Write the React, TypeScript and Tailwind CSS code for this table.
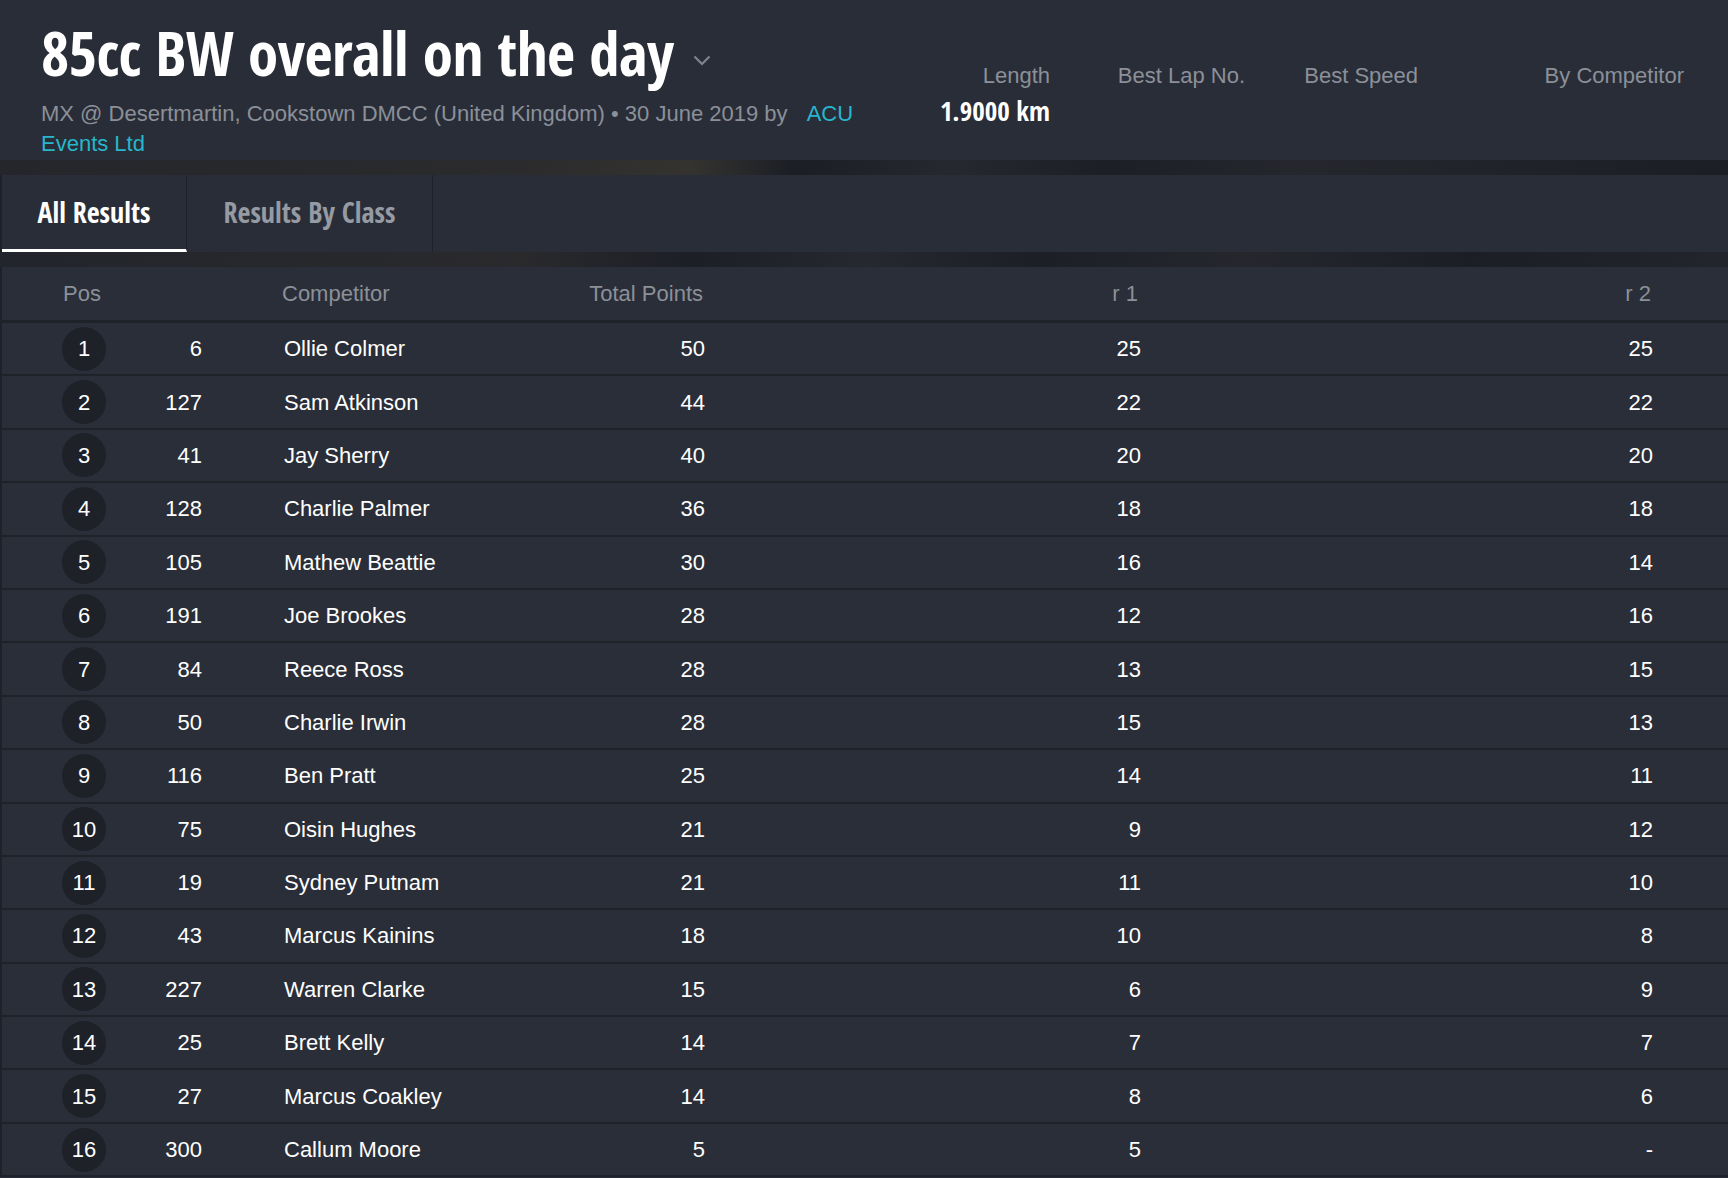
import React from "react";

const rows: [number, string, string, string, string, string][] = [
  [1, "6", "Ollie Colmer", "50", "25", "25"],
  [2, "127", "Sam Atkinson", "44", "22", "22"],
  [3, "41", "Jay Sherry", "40", "20", "20"],
  [4, "128", "Charlie Palmer", "36", "18", "18"],
  [5, "105", "Mathew Beattie", "30", "16", "14"],
  [6, "191", "Joe Brookes", "28", "12", "16"],
  [7, "84", "Reece Ross", "28", "13", "15"],
  [8, "50", "Charlie Irwin", "28", "15", "13"],
  [9, "116", "Ben Pratt", "25", "14", "11"],
  [10, "75", "Oisin Hughes", "21", "9", "12"],
  [11, "19", "Sydney Putnam", "21", "11", "10"],
  [12, "43", "Marcus Kainins", "18", "10", "8"],
  [13, "227", "Warren Clarke", "15", "6", "9"],
  [14, "25", "Brett Kelly", "14", "7", "7"],
  [15, "27", "Marcus Coakley", "14", "8", "6"],
  [16, "300", "Callum Moore", "5", "5", "-"],
];

const cond = "font-['Open_Sans_Condensed','Liberation_Sans_Narrow','Open_Sans',sans-serif] font-bold font-stretch-condensed";

export default function App() {
  return (
    <div className="min-h-screen w-full bg-[#292d37] font-['Liberation_Sans',Arial,sans-serif] text-[22px]">
      {/* Header */}
      <div className="flex h-[160px] items-start bg-[#292d37]">
        <div className="w-[878px] pl-[41px] pt-[16px] shrink-0">
          <div className="flex items-center">
            <h1 className={`${cond} text-[61px] leading-[74px] text-white tracking-[-0.5px]`}>
              85cc BW overall on the day
            </h1>
            <svg className="ml-[19px] mt-[14px]" width="18" height="11" viewBox="0 0 18 11">
              <polyline points="1.5,1.5 9,9 16.5,1.5" fill="none" stroke="#7f848d" strokeWidth="2.2" />
            </svg>
          </div>
          <p className="mt-[9px] leading-[30px] text-[#8b9099]">
            MX @ Desertmartin, Cookstown DMCC (United Kingdom) • 30 June 2019 by{" "}
            <span className="ml-[13px] text-[#27b6cb]">ACU Events Ltd</span>
          </p>
        </div>
        <div className="ml-[11px] mt-[61px] flex text-right">
          <div className="w-[161px]">
            <div className="leading-[30px] text-[#8b9099]">Length</div>
            <div className={`${cond} mt-[2px] text-[27px] leading-[36px] text-white`}>1.9000 km</div>
          </div>
          <div className="w-[195px]">
            <div className="leading-[30px] text-[#8b9099]">Best Lap No.</div>
          </div>
          <div className="w-[173px]">
            <div className="leading-[30px] text-[#8b9099]">Best Speed</div>
          </div>
          <div className="w-[266px]">
            <div className="leading-[30px] text-[#8b9099]">By Competitor</div>
          </div>
        </div>
      </div>

      {/* strip */}
      <div className="h-[15px] bg-[linear-gradient(90deg,#24262b_0%,#2b2b2d_30%,#34332f_40%,#1b1e25_46%,#262830_55%,#1c1f26_64%,#25272d_75%,#1b1e25_100%)]" />

      {/* Tabs */}
      <div className="flex h-[77px] border-l-2 border-[#1e2128] bg-[#292d37]">
        <div className={`${cond} flex w-[185px] items-center justify-center border-b-[3px] border-r border-b-white border-r-[#1f2229] pb-[1px] text-[28px] text-white`}>
          All Results
        </div>
        <div className={`${cond} flex w-[246px] items-center justify-center border-r border-[#1f2229] pb-[4px] text-[28px] text-[#959aa3]`}>
          Results By Class
        </div>
      </div>

      {/* strip */}
      <div className="h-[15px] bg-[linear-gradient(90deg,#22252b_0%,#2a2a2d_30%,#1c1f26_40%,#262830_50%,#1c1f26_60%,#25272d_72%,#1b1e25_85%,#23252c_100%)]" />

      {/* Table */}
      <div className="border-l-2 border-[#1e2128] bg-[#2a2e38]">
        <div className="flex h-[56px] items-center border-b-[3px] border-[#1f2229] text-[#8b9099]">
          <div className="w-[104px] pl-[61px]">Pos</div>
          <div className="w-[96px]" />
          <div className="ml-[80px] w-[300px]">Competitor</div>
          <div className="w-[122px] text-right pr-[1px]">Total Points</div>
          <div className="w-[436px] text-right pr-[2px]">r 1</div>
          <div className="w-[512px] text-right pr-[1px]">r 2</div>
        </div>
        {rows.map(([pos, num, name, tot, r1, r2]) => (
          <div
            key={pos}
            className="flex h-[53.4px] items-center border-b-2 border-[#1f2229] text-white"
          >
            <div className="w-[104px] pl-[60px]">
              <div className="flex h-[44px] w-[44px] items-center justify-center rounded-full bg-[#1e2128]">
                {pos}
              </div>
            </div>
            <div className="w-[96px] text-right">{num}</div>
            <div className="ml-[82px] w-[298px]">{name}</div>
            <div className="w-[123px] text-right">{tot}</div>
            <div className="w-[436px] text-right">{r1}</div>
            <div className="w-[512px] text-right">{r2}</div>
          </div>
        ))}
      </div>
    </div>
  );
}
